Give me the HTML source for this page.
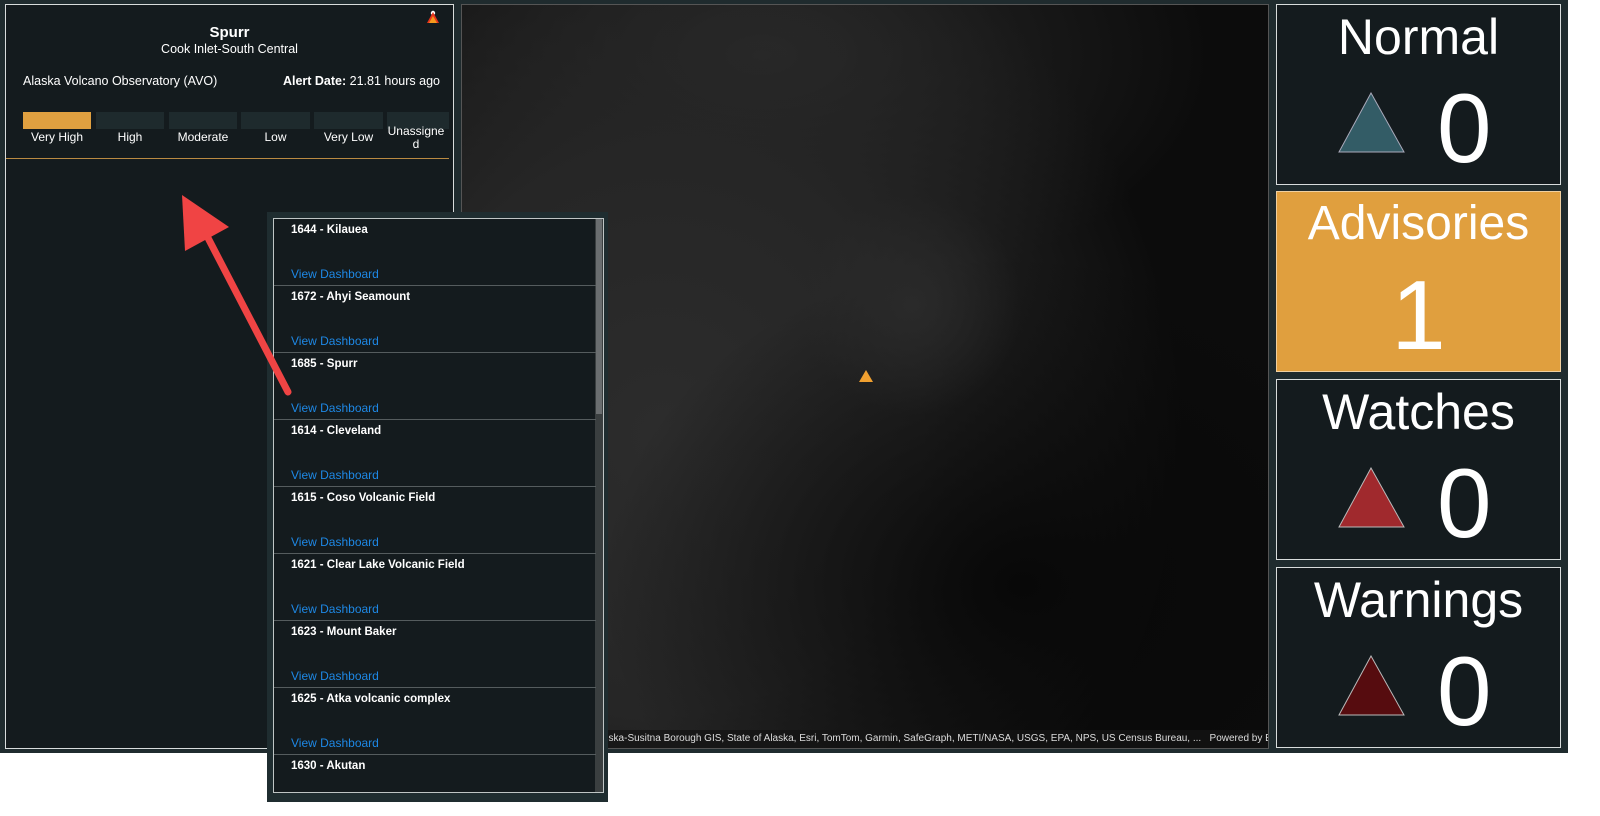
<!DOCTYPE html>
<html><head><meta charset="utf-8"><style>
*{margin:0;padding:0;box-sizing:border-box}
html,body{width:1600px;height:816px;overflow:hidden}
body{background:#fff;position:relative;font-family:"Liberation Sans",sans-serif;color:#fff}
.a{position:absolute}
.bg{left:0;top:0;width:1568px;height:753px;background:#1f2b2e}
.panel{left:5px;top:4px;width:449px;height:745px;background:#141b1e;border:1px solid #d8dcdc;overflow:hidden}
.seg{top:107px;height:17px;background:#1e2a2d}
.lab{font-size:12px;text-align:center;line-height:13px}
.map{left:461px;top:4px;width:808px;height:745px;overflow:hidden;border:1px solid #555;
background:
radial-gradient(circle at 450px 300px,#2a2a2a 0,rgba(30,30,30,0) 110px),
radial-gradient(ellipse 420px 330px at 560px 580px,#080808 0,rgba(8,8,8,0) 100%),
radial-gradient(ellipse 520px 560px at 200px 430px,#2c2c2c 0,#262626 50%,rgba(12,12,12,0) 100%),
radial-gradient(ellipse 450px 250px at 300px 50px,#2a2a2a 0,rgba(30,30,30,0) 100%),
#0c0c0c}
.card{left:1276px;width:285px;height:181px;background:#141b1e;border:1px solid #d8dcdc;text-align:center;overflow:hidden}
.card .t{position:absolute;left:0;right:0;top:2px;font-size:50px;line-height:60px}
.card .n{position:absolute;left:160px;top:68px;font-size:98px;line-height:110px}
.card svg{position:absolute;left:61px;top:87px}
.pop{left:267px;top:212px;width:341px;height:590px;background:#1f2d30}
.list{left:273px;top:218px;width:331px;height:575px;background:#141b1e;border:1px solid #bfc5c5;overflow:hidden}
.it{position:relative;height:67px;border-bottom:1px solid #555c5e;width:322px}
.it b{position:absolute;left:17px;top:5px;font-size:11.5px}
.it span{position:absolute;left:17px;top:48px;font-size:12px;color:#1e88e5}
</style></head><body>
<div class="a bg"></div>
<div class="a panel">
 <svg class="a" style="left:420px;top:3px" width="14" height="16"><circle cx="7" cy="5" r="2.2" fill="#fff"/><path d="M7 4 L13 15 H1 Z" fill="#e8341c"/><path d="M7 8 L11 15 H3Z" fill="#f59a1d"/></svg>
 <div class="a" style="left:0;right:0;top:19px;text-align:center;font-size:15px;font-weight:bold">Spurr</div>
 <div class="a" style="left:0;right:0;top:37px;text-align:center;font-size:12.5px">Cook Inlet-South Central</div>
 <div class="a" style="left:17px;top:69px;font-size:12.5px">Alaska Volcano Observatory (AVO)</div>
 <div class="a" style="right:13px;top:69px;font-size:12.5px"><b>Alert Date:</b> 21.81 hours ago</div>
 <div class="a seg" style="left:17px;width:68px;background:#e0a040"></div>
 <div class="a seg" style="left:90px;width:68px"></div>
 <div class="a seg" style="left:163px;width:68px"></div>
 <div class="a seg" style="left:235px;width:69px"></div>
 <div class="a seg" style="left:308px;width:69px"></div>
 <div class="a seg" style="left:381px;width:62px"></div>
 <div class="a lab" style="left:17px;width:68px;top:126px">Very High</div>
 <div class="a lab" style="left:90px;width:68px;top:126px">High</div>
 <div class="a lab" style="left:163px;width:68px;top:126px">Moderate</div>
 <div class="a lab" style="left:235px;width:69px;top:126px">Low</div>
 <div class="a lab" style="left:308px;width:69px;top:126px">Very Low</div>
 <div class="a lab" style="left:375px;width:70px;top:120px">Unassigne<br>d</div>
 <div class="a" style="left:0;top:153px;width:443px;height:1px;background:#b98a42"></div>
</div>
<div class="a map">
 <svg class="a" style="left:396px;top:364px" width="16" height="14"><path d="M8 1 L15 13 H1Z" fill="#f0a030"/></svg>
 <div class="a" style="left:0;right:0;bottom:0;height:18px;background:rgba(20,20,20,.7);font-size:10px;line-height:18px;color:#ddd;white-space:nowrap;padding-left:141px;overflow:hidden">uska-Susitna Borough GIS, State of Alaska, Esri, TomTom, Garmin, SafeGraph, METI/NASA, USGS, EPA, NPS, US Census Bureau, ... &nbsp;&nbsp;Powered by Esri</div>
</div>
<div class="a card" style="top:4px"><div class="t">Normal</div><svg width="68" height="62"><path d="M33 1 L66 60 H1Z" fill="#335c66" stroke="#aab" stroke-width="1"/></svg><div class="n">0</div></div>
<div class="a card" style="top:191px;background:#e09f3e;border-color:#f0d0a0"><div class="t" style="font-size:48px">Advisories</div><div class="n" style="left:0;right:0;top:68px">1</div></div>
<div class="a card" style="top:379px"><div class="t">Watches</div><svg width="68" height="62"><path d="M33 1 L66 60 H1Z" fill="#a0292d" stroke="#bbb" stroke-width="1"/></svg><div class="n">0</div></div>
<div class="a card" style="top:567px"><div class="t">Warnings</div><svg width="68" height="62"><path d="M33 1 L66 60 H1Z" fill="#560c0f" stroke="#bbb" stroke-width="1"/></svg><div class="n">0</div></div>
<div class="a pop"></div>
<div class="a list">
 <div class="a" style="right:0;top:0;width:8px;height:573px;background:#3a3f40"></div>
 <div class="a" style="right:1px;top:0;width:6px;height:195px;background:#6a6e70"></div>
 <div class="it"><b>1644 - Kilauea</b><span>View Dashboard</span></div>
 <div class="it"><b>1672 - Ahyi Seamount</b><span>View Dashboard</span></div>
 <div class="it"><b>1685 - Spurr</b><span>View Dashboard</span></div>
 <div class="it"><b>1614 - Cleveland</b><span>View Dashboard</span></div>
 <div class="it"><b>1615 - Coso Volcanic Field</b><span>View Dashboard</span></div>
 <div class="it"><b>1621 - Clear Lake Volcanic Field</b><span>View Dashboard</span></div>
 <div class="it"><b>1623 - Mount Baker</b><span>View Dashboard</span></div>
 <div class="it"><b>1625 - Atka volcanic complex</b><span>View Dashboard</span></div>
 <div class="it" style="border:none;height:50px"><b>1630 - Akutan</b></div>
</div>
<svg class="a" style="left:0;top:0" width="600" height="420">
 <line x1="207" y1="236" x2="288" y2="392" stroke="#f04444" stroke-width="7" stroke-linecap="round"/>
 <path d="M182 195 L185 251 L229 227Z" fill="#f04444"/>
</svg>
</body></html>
